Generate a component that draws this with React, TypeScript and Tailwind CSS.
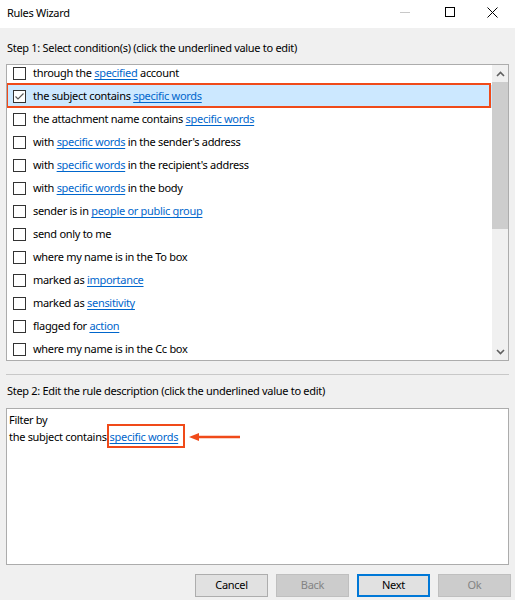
import React from "react";

type Part = { t: string; link?: boolean };

const conditions: Part[][] = [
  [{ t: "through the " }, { t: "specified", link: true }, { t: " account" }],
  [{ t: "the subject contains " }, { t: "specific words", link: true }],
  [{ t: "the attachment name contains " }, { t: "specific words", link: true }],
  [{ t: "with " }, { t: "specific words", link: true }, { t: " in the sender's address" }],
  [{ t: "with " }, { t: "specific words", link: true }, { t: " in the recipient's address" }],
  [{ t: "with " }, { t: "specific words", link: true }, { t: " in the body" }],
  [{ t: "sender is in " }, { t: "people or public group", link: true }],
  [{ t: "send only to me" }],
  [{ t: "where my name is in the To box" }],
  [{ t: "marked as " }, { t: "importance", link: true }],
  [{ t: "marked as " }, { t: "sensitivity", link: true }],
  [{ t: "flagged for " }, { t: "action", link: true }],
  [{ t: "where my name is in the Cc box" }],
];

const font = { fontFamily: '"Noto Sans", "Segoe UI", Arial, sans-serif' };

const linkCls =
  "text-[#0066cc] underline underline-offset-[2px] [text-decoration-skip-ink:none]";

function Checkbox({ checked }: { checked?: boolean }) {
  return (
    <div className="w-[13px] h-[13px] border border-[#333333] bg-white flex items-center justify-center shrink-0">
      {checked && (
        <svg width="11" height="11" viewBox="0 0 11 11">
          <path d="M1.5 5.5 L4 8 L9.5 2.5" fill="none" stroke="#555555" strokeWidth="1.1" />
        </svg>
      )}
    </div>
  );
}

function Row({ parts, selected }: { parts: Part[]; selected?: boolean }) {
  return (
    <div className={`relative h-[23px] flex items-center pl-[6px] ${selected ? "bg-[#cce8ff]" : ""}`}>
      <Checkbox checked={selected} />
      <span className="ml-[7px] whitespace-nowrap text-black">
        {parts.map((p, i) =>
          p.link ? (
            <span key={i} className={linkCls}>
              {p.t}
            </span>
          ) : (
            <span key={i}>{p.t}</span>
          )
        )}
      </span>
      {selected && (
        <div className="absolute left-[-1px] right-[1px] top-[-2px] bottom-0 border-2 border-[#f04a19] pointer-events-none" />
      )}
    </div>
  );
}

function Chevron({ up }: { up?: boolean }) {
  return (
    <svg width="9" height="6" viewBox="0 0 9 6">
      <path
        d={up ? "M1 5 L4.5 1.5 L8 5" : "M1 1 L4.5 4.5 L8 1"}
        fill="none"
        stroke="#606060"
        strokeWidth="1.6"
      />
    </svg>
  );
}

function Button({ label, disabled, primary }: { label: string; disabled?: boolean; primary?: boolean }) {
  const cls = disabled
    ? "bg-[#cccccc] border border-[#bfbfbf] text-[#838383]"
    : primary
    ? "bg-[#e1e1e1] border-2 border-[#0078d7] text-black"
    : "bg-[#e1e1e1] border border-[#adadad] text-black";
  return <div className={`w-[73px] h-[23px] flex items-center justify-center ${cls}`}>{label}</div>;
}

export default function App() {
  return (
    <div
      className="w-[515px] h-[600px] bg-[#f0f0f0] flex flex-col text-[11px] tracking-[-0.3px] text-black overflow-hidden"
      style={font}
    >
      {/* title bar */}
      <div className="h-[28px] bg-white flex items-center shrink-0">
        <span className="ml-[7px] -mt-[2px]">Rules Wizard</span>
        <div className="ml-auto flex items-center h-full">
          <div className="w-[45px] flex justify-center">
            <div className="w-[10px] h-px bg-[#c8c8c8] -mt-[2px]" />
          </div>
          <div className="w-[45px] flex justify-center">
            <div className="w-[10px] h-[10px] border border-black -mt-[4px]" />
          </div>
          <div className="w-[43px] flex justify-center">
            <svg width="11" height="11" viewBox="0 0 11 11" className="-mt-[4px] -ml-[3px]">
              <path d="M0.5 0.5 L10.5 10.5 M10.5 0.5 L0.5 10.5" stroke="#000" strokeWidth="1" />
            </svg>
          </div>
        </div>
      </div>

      {/* step 1 */}
      <div className="h-[36px] flex items-center pl-[7px] pt-[4px] shrink-0">
        Step 1: Select condition(s) (click the underlined value to edit)
      </div>
      <div className="mx-[6px] h-[297px] border border-[#acacac] bg-white flex shrink-0">
        <div className="flex-1 overflow-hidden">
          <div className="-mt-[3px]">
            {conditions.map((c, i) => (
              <Row key={i} parts={c} selected={i === 1} />
            ))}
          </div>
        </div>
        <div className="w-[16px] bg-[#f0f0f0] flex flex-col shrink-0">
          <div className="h-[17px] flex items-center justify-center">
            <Chevron up />
          </div>
          <div className="h-[147px] bg-[#cdcdcd]" />
          <div className="flex-1" />
          <div className="h-[17px] flex items-center justify-center">
            <Chevron />
          </div>
        </div>
      </div>

      <div className="mx-[6px] mt-[13px] h-px bg-[#c8c8c8] shrink-0" />

      {/* step 2 */}
      <div className="h-[33px] flex items-center pl-[7px] shrink-0">
        Step 2: Edit the rule description (click the underlined value to edit)
      </div>
      <div className="mx-[6px] h-[157px] border border-[#acacac] bg-white pl-[2px] pt-[2px] leading-[17px] shrink-0">
        <div>Filter by</div>
        <div className="flex items-center whitespace-nowrap">
          <span>the subject contains</span>
          <span className={`relative ml-[3px] ${linkCls}`}>
            specific words
            <span className="absolute -left-[3px] -right-[7px] -top-[4px] -bottom-[3px] border-2 border-[#f04a19]" />
          </span>
          <svg width="52" height="10" viewBox="0 0 52 10" className="ml-[11px]">
            <path d="M8 5 L51 5" stroke="#f04a19" strokeWidth="2.4" />
            <path d="M0 5 L10 1 L10 9 Z" fill="#f04a19" />
          </svg>
        </div>
      </div>

      {/* buttons */}
      <div className="flex justify-end gap-[8px] pr-[4px] mt-[9px]">
        <Button label="Cancel" />
        <Button label="Back" disabled />
        <Button label="Next" primary />
        <Button label="Ok" disabled />
      </div>
    </div>
  );
}
